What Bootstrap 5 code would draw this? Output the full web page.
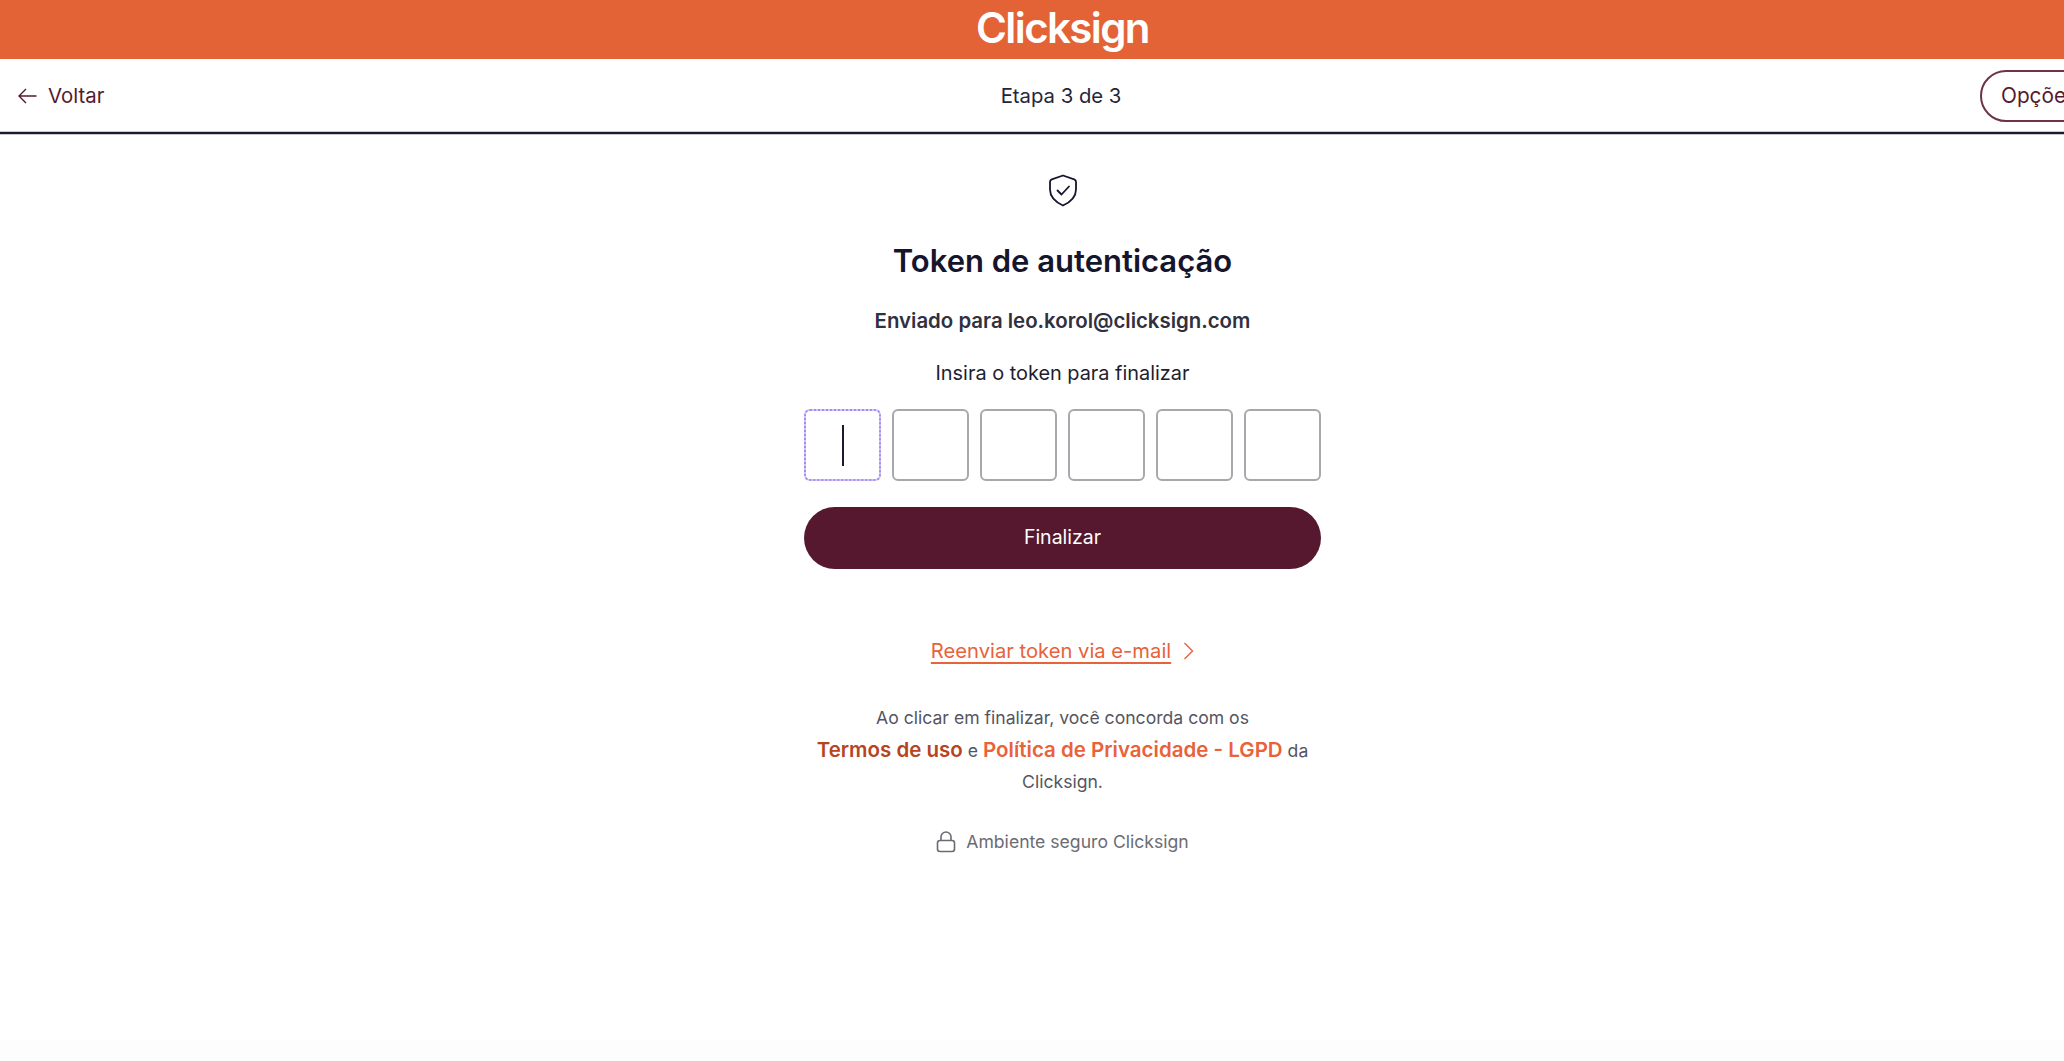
<!DOCTYPE html>
<html lang="pt-BR">
<head>
<meta charset="utf-8">
<title>Clicksign</title>
<link href="https://cdn.jsdelivr.net/npm/bootstrap@5.3.0/dist/css/bootstrap.min.css" rel="stylesheet">
<style>
html,body{height:100%;overflow:hidden}
body{width:2125px;font-family:Inter,"Liberation Sans",sans-serif;color:#1a1a2e;background:linear-gradient(#fff 97%,#fcfcfc)}
.brandbar{height:59px;background:#e36337}
.brandname{font-family:Inter,sans-serif;font-weight:600;font-size:42px;line-height:56px;color:#fff;letter-spacing:-1.6px}
.stepbar{height:75px;border-bottom:2px solid #191a2c;box-shadow:inset 0 -1px 0 #c8c8d0,0 1px 0 #c8c8d0;padding:1px 21px 0 18px}
.stepside{width:124px}
.backlink{color:#561a30;font-size:20.4px;text-decoration:none;gap:11px}
.steptext{font-size:20.3px;color:#25253a}
.optbtn{height:52px;width:124px;margin-top:-1px;border:2px solid #6d3349;border-radius:26px;background:#fff;color:#561a30;font-size:20.8px;padding:0 0 0 19px;white-space:nowrap;text-align:left;overflow:hidden}
.formcol{width:517px;padding-top:40px}
.shieldbox{height:33px}
.shieldbox svg{display:block}
.pagetitle{font-size:31px;font-weight:600;color:#15152b;margin:34px 0 0;line-height:40px}
.sentto{font-size:20.4px;font-weight:600;color:#30303f;margin:25px 0 0;line-height:30px}
.hinttext{font-size:19.9px;color:#1e1e30;margin:22px 0 0;line-height:30px}
.tokenrow{margin-top:21px;gap:11px}
.tokenbox{width:77px;height:72px;border:2px solid #a8a7ac;border-radius:6px;background:#fff;position:relative}
.tokenbox.isfocus{border-color:#cfc6f5;outline:2px dotted #a78bf0;outline-offset:-2px}
.caret-line{position:absolute;left:36px;top:14px;width:2px;height:41px;background:#191a2c}
.finishbtn{margin-top:26px;height:62px;width:517px;background:#55182e;color:#fff;border:0;border-radius:31px;font-size:19.5px}
.finishbtn:hover{background:#55182e;color:#fff}
.resend{margin-top:67px;gap:12px;line-height:30px}
.resend a{color:#e8623a;font-size:20.2px;text-decoration:underline;text-underline-offset:4px}
.legal{font-size:17.6px;line-height:31.5px;color:#55555f;margin-top:36px;width:517px}
.legal a{font-size:20.5px;font-weight:600;text-decoration:none}
.termlink{color:#b6451f}
.policylink{color:#e8623a}
.safe{margin-top:29px;font-size:17.6px;color:#6b6b73;gap:10px;line-height:30px}
</style>
</head>
<body>
<header class="brandbar d-flex justify-content-center"><span class="brandname">Clicksign</span></header>
<nav class="stepbar d-flex align-items-center justify-content-between">
  <div class="stepside">
  <a href="#" class="backlink d-inline-flex align-items-center">
    <svg width="19" height="16" viewBox="0 0 19 16" fill="none" stroke="#561a30" stroke-width="1.4"><path d="M18.5 8H1M8 1 1 8l7 7"/></svg>
    Voltar</a>
  </div>
  <span class="steptext">Etapa 3 de 3</span>
  <button class="optbtn" type="button">Opções</button>
</nav>
<main class="d-flex justify-content-center">
<div class="formcol d-flex flex-column align-items-center text-center">
  <div class="shieldbox">
    <svg width="30" height="33" viewBox="0 0 30 33" fill="none" stroke="#15152b" stroke-width="1.8" stroke-linejoin="round" stroke-linecap="round"><path d="M15 1.5 26.2 5.3Q28 6 28 8V15.5C28 23 21.5 28.5 15 31.5 8.5 28.5 2 23 2 15.5V8Q2 6 3.8 5.3Z"/><path d="M9.5 16.5l4 4 7.5-8"/></svg>
  </div>
  <h1 class="pagetitle">Token de autenticação</h1>
  <p class="sentto">Enviado para leo.korol@clicksign.com</p>
  <p class="hinttext">Insira o token para finalizar</p>
  <div class="tokenrow d-flex">
    <div class="tokenbox isfocus"><span class="caret-line"></span></div>
    <div class="tokenbox"></div><div class="tokenbox"></div><div class="tokenbox"></div><div class="tokenbox"></div><div class="tokenbox"></div>
  </div>
  <button class="btn finishbtn" type="button">Finalizar</button>
  <div class="resend d-flex align-items-center">
    <a href="#">Reenviar token via e-mail</a>
    <svg width="11" height="18" viewBox="0 0 11 18" fill="none" stroke="#e8623a" stroke-width="1.4"><path d="M1.5 1l8 8-8 8"/></svg>
  </div>
  <div class="legal">Ao clicar em finalizar, você concorda com os<br><a class="termlink" href="#">Termos de uso</a> e <a class="policylink" href="#">Política de Privacidade - LGPD</a> da<br>Clicksign.</div>
  <div class="safe d-flex align-items-center">
    <svg width="20" height="22" viewBox="0 0 20 22" fill="none" stroke="#6b6b73" stroke-width="1.6"><rect x="1.5" y="9.5" width="17" height="11" rx="2.5"/><path d="M5 9.5V6a5 5 0 0 1 10 0v3.5"/></svg>
    <span>Ambiente seguro Clicksign</span>
  </div>
</div>
</main>
<script src="https://cdn.jsdelivr.net/npm/bootstrap@5.3.0/dist/js/bootstrap.bundle.min.js"></script>
</body>
</html>
